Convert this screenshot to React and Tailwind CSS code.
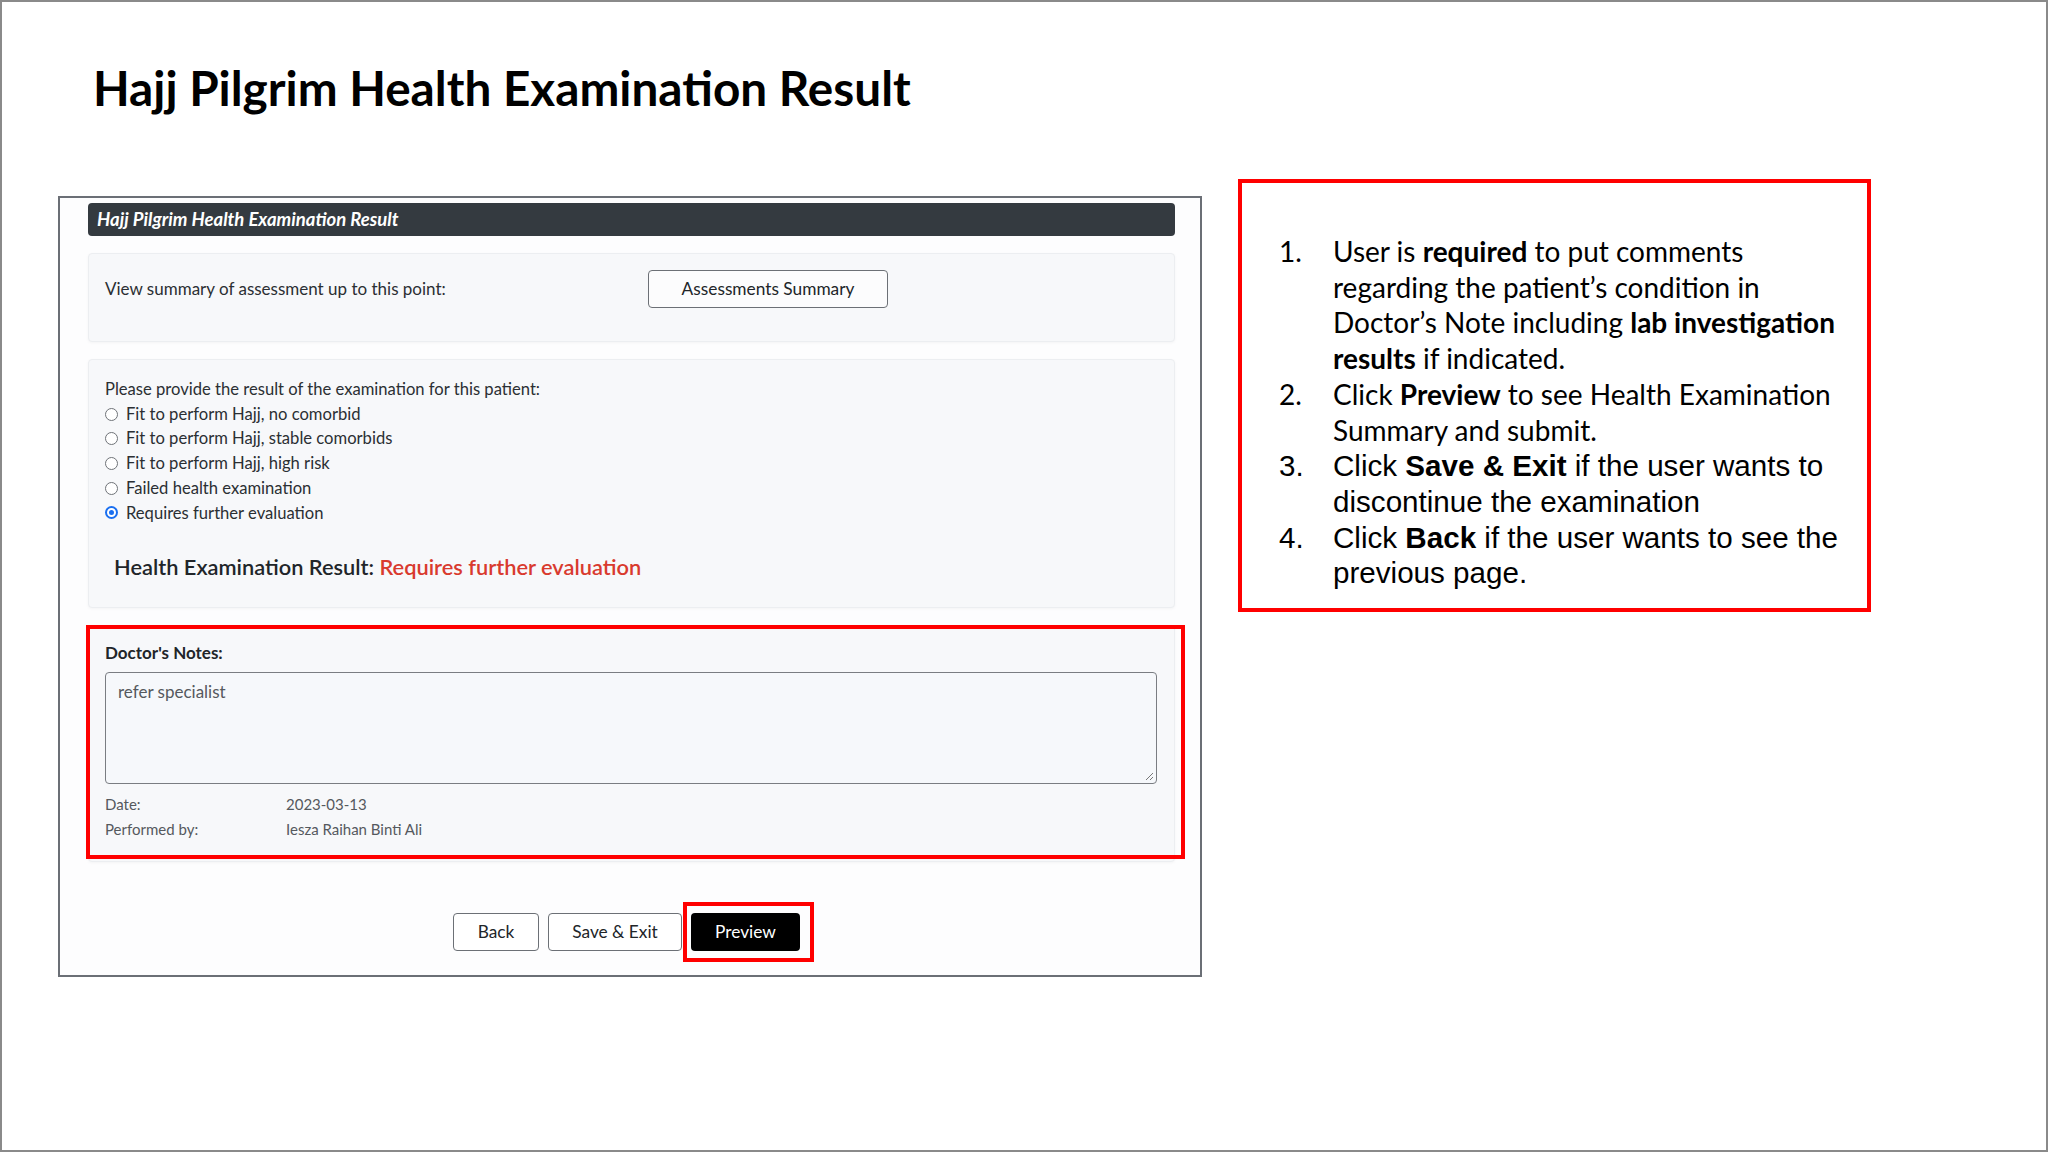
import React from 'react';

// Slide: health examination result form + instructions callout

const form = { fontFamily: 'Lato, "Open Sans", sans-serif' };
const calibri = { fontFamily: 'Lato, "Liberation Sans", sans-serif' };
const arial = { fontFamily: '"Liberation Sans", Arial, sans-serif' };

const options = [
  'Fit to perform Hajj, no comorbid',
  'Fit to perform Hajj, stable comorbids',
  'Fit to perform Hajj, high risk',
  'Failed health examination',
  'Requires further evaluation',
];

const Radio = ({ checked }) =>
  checked ? (
    <span className="w-[13px] h-[13px] rounded-full bg-[#1a6ff0] flex items-center justify-center shrink-0">
      <span className="w-[9px] h-[9px] rounded-full border-2 border-white bg-[#1a6ff0]" />
    </span>
  ) : (
    <span className="w-[13px] h-[13px] rounded-full border border-[#6f7378] bg-white shrink-0" />
  );

const Card = ({ children, className = '' }) => (
  <div
    className={`bg-[#f7f8fa] border border-[#eceef1] rounded-[4px] shadow-[0_1px_3px_rgba(0,0,0,0.04)] ${className}`}
  >
    {children}
  </div>
);

const FormPanel = () => (
  <div
    style={form}
    className="mt-[17px] ml-[56px] w-[1144px] h-[781px] border-2 border-[#6b6f76] bg-[#fdfdfe] pt-[5px] pl-[28px] pr-[25px] text-[#2b2f33]"
  >
    {/* header bar */}
    <div className="h-[33px] bg-[#343a40] rounded-[4px] flex items-center pl-[9px]">
      <span className="text-white italic font-bold text-[18.5px]">
        Hajj Pilgrim Health Examination Result
      </span>
    </div>

    {/* assessments summary */}
    <Card className="mt-[17px] h-[89px] pl-[16px] pt-[16px]">
      <div className="flex items-center h-[38px]">
        <div className="w-[543px] text-[17px]">View summary of assessment up to this point:</div>
        <button className="w-[240px] h-[38px] border border-[#6c7076] rounded-[4px] bg-white/60 text-[17.3px] text-[#212529]">
          Assessments Summary
        </button>
      </div>
    </Card>

    {/* examination result */}
    <Card className="mt-[17px] h-[249px] pl-[16px] pt-[17px]">
      <div className="text-[16.6px] leading-[24.7px]">
        <div>Please provide the result of the examination for this patient:</div>
        {options.map((o, i) => (
          <div key={o} className="flex items-center">
            <Radio checked={i === 4} />
            <span className="ml-[8px]">{o}</span>
          </div>
        ))}
      </div>
      <div className="mt-[27px] ml-[9px] text-[21.8px] leading-[30px] font-semibold text-[#212529]">
        Health Examination Result: <span className="text-[#d93a2e]">Requires further evaluation</span>
      </div>
    </Card>

    {/* doctor's notes, outlined in red */}
    <div className="relative mt-[17px]">
      <Card className="h-[237px] pl-[16px] pr-[17px] pt-[15px]">
        <div className="text-[17px] leading-[24px] font-bold text-[#212529]">Doctor's Notes:</div>
        <div className="mt-[7px] h-[112px] border-[1.5px] border-[#7a7d82] rounded-[4px] bg-[#f6f8fb] relative px-[12px] pt-[6px] text-[17px] text-[#55595e]">
          refer specialist
          <svg className="absolute right-[2px] bottom-[2px]" width="10" height="10" viewBox="0 0 10 10">
            <path d="M9 2 L2 9 M9 6 L6 9" stroke="#777" strokeWidth="1" fill="none" />
          </svg>
        </div>
        <div className="mt-[8px] text-[15px] leading-[24.7px] text-[#55595e]">
          <div className="flex">
            <span className="w-[181px]">Date:</span>
            <span>2023-03-13</span>
          </div>
          <div className="flex">
            <span className="w-[181px]">Performed by:</span>
            <span>Iesza Raihan Binti Ali</span>
          </div>
        </div>
      </Card>
      <div className="absolute -left-[2px] -right-[10px] top-0 bottom-[3px] border-4 border-[#ff0000] pointer-events-none" />
    </div>

    {/* actions */}
    <div className="mt-[51px] ml-[365px] flex gap-[9px] text-[17.3px]">
      <button className="w-[86px] h-[38px] border border-[#6c7076] rounded-[4px] bg-white text-[#212529]">
        Back
      </button>
      <button className="w-[134px] h-[38px] border border-[#6c7076] rounded-[4px] bg-white text-[#212529]">
        Save &amp; Exit
      </button>
      <div className="relative">
        <button className="w-[109px] h-[38px] rounded-[4px] bg-black text-white">Preview</button>
        <div className="absolute -left-[8px] -right-[14px] -top-[11px] -bottom-[11px] border-4 border-[#ff0000] pointer-events-none" />
      </div>
    </div>
  </div>
);

const Instructions = () => (
  <div className="ml-[36px] w-[633px] h-[433px] border-4 border-[#ff0000] pt-[51px] pl-[37px] text-black leading-[35.7px]">
    <div className="flex text-[28px]" style={calibri}>
      <span className="w-[54px]">1.</span>
      <span className="whitespace-nowrap">
        User is <b>required</b> to put comments
        <br />
        regarding the patient’s condition in
        <br />
        Doctor’s Note including <b>lab investigation</b>
        <br />
        <b>results</b> if indicated.
      </span>
    </div>
    <div className="flex text-[28px]" style={calibri}>
      <span className="w-[54px]">2.</span>
      <span className="whitespace-nowrap">
        Click <b>Preview</b> to see Health Examination
        <br />
        Summary and submit.
      </span>
    </div>
    <div className="flex text-[29.6px]" style={arial}>
      <span className="w-[54px]">3.</span>
      <span className="whitespace-nowrap">
        Click <b>Save &amp; Exit</b> if the user wants to
        <br />
        discontinue the examination
      </span>
    </div>
    <div className="flex text-[29.6px]" style={arial}>
      <span className="w-[54px]">4.</span>
      <span className="whitespace-nowrap">
        Click <b>Back</b> if the user wants to see the
        <br />
        previous page.
      </span>
    </div>
  </div>
);

export default function App() {
  return (
    <div className="w-[2048px] h-[1152px] border-2 border-[#8a8a8a] bg-white overflow-hidden">
      <h1
        style={calibri}
        className="mt-[62px] ml-[91px] text-[47.7px] leading-[48px] font-bold text-black"
      >
        Hajj Pilgrim Health Examination Result
      </h1>
      <div className="mt-[67px] flex items-start">
        <FormPanel />
        <Instructions />
      </div>
    </div>
  );
}
